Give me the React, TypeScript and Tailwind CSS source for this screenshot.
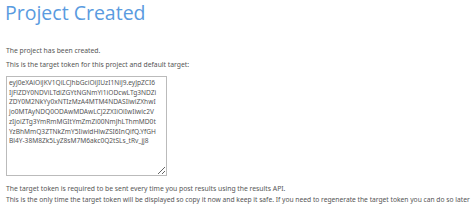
import React from "react";

const token = [
  "eyJ0eXAiOiJKV1QiLCJhbGciOiJIUzI1NiJ9.eyJpZCI6",
  "IjFlZDY0NDViLTdiZGYtNGNmYi1iODcwLTg3NDZi",
  "ZDY0M2NkYy0xNTIzMzA4MTM4NDASIiwiZXhwI",
  "jo0MTAyNDQ0ODAwMDAwLCJ2ZXIiOiIwIiwic2V",
  "zIjoiZTg3YmRmMGItYmZmZi00NmJhLThmMD0t",
  "YzBhMmQ3ZTNkZmY5IiwidHlwZSI6InQifQ.YfGH",
  "Bl4Y-38M8Zk5LyZ8sM7M6akc0Q2tSLs_tRv_jj8",
].join("\n");

export default function App() {
  return (
    <div className="w-[474px] h-[211px] overflow-hidden bg-white px-[6px] font-['Noto_Sans',sans-serif] text-[#555]">
      <h1 className="pt-[1px] text-[19.5px] leading-[24px] font-['Open_Sans',sans-serif] text-[#5a9be0] -ml-[1px]">
        Project Created
      </h1>
      <p className="mt-[21px] text-[6.8px] leading-[10px]">The project has been created.</p>
      <p className="mt-[4px] text-[6.8px] leading-[10px]">
        This is the target token for this project and default target:
      </p>
      <textarea
        readOnly
        defaultValue={token}
        className="mt-[6px] block w-[161px] h-[100px] border border-[#bbb] px-[2px] py-[1px] text-[6.6px] leading-[9.7px] text-[#555] whitespace-pre overflow-hidden"
      />
      <p className="mt-[8px] text-[6.8px] leading-[10px] whitespace-nowrap">
        The target token is required to be sent every time you post results using the results API.
      </p>
      <p className="mt-[1px] text-[6.7px] leading-[10px] whitespace-nowrap">
        This is the only time the target token will be displayed so copy it now and keep it safe. If you need to regenerate the target token you can do so later
      </p>
    </div>
  );
}
